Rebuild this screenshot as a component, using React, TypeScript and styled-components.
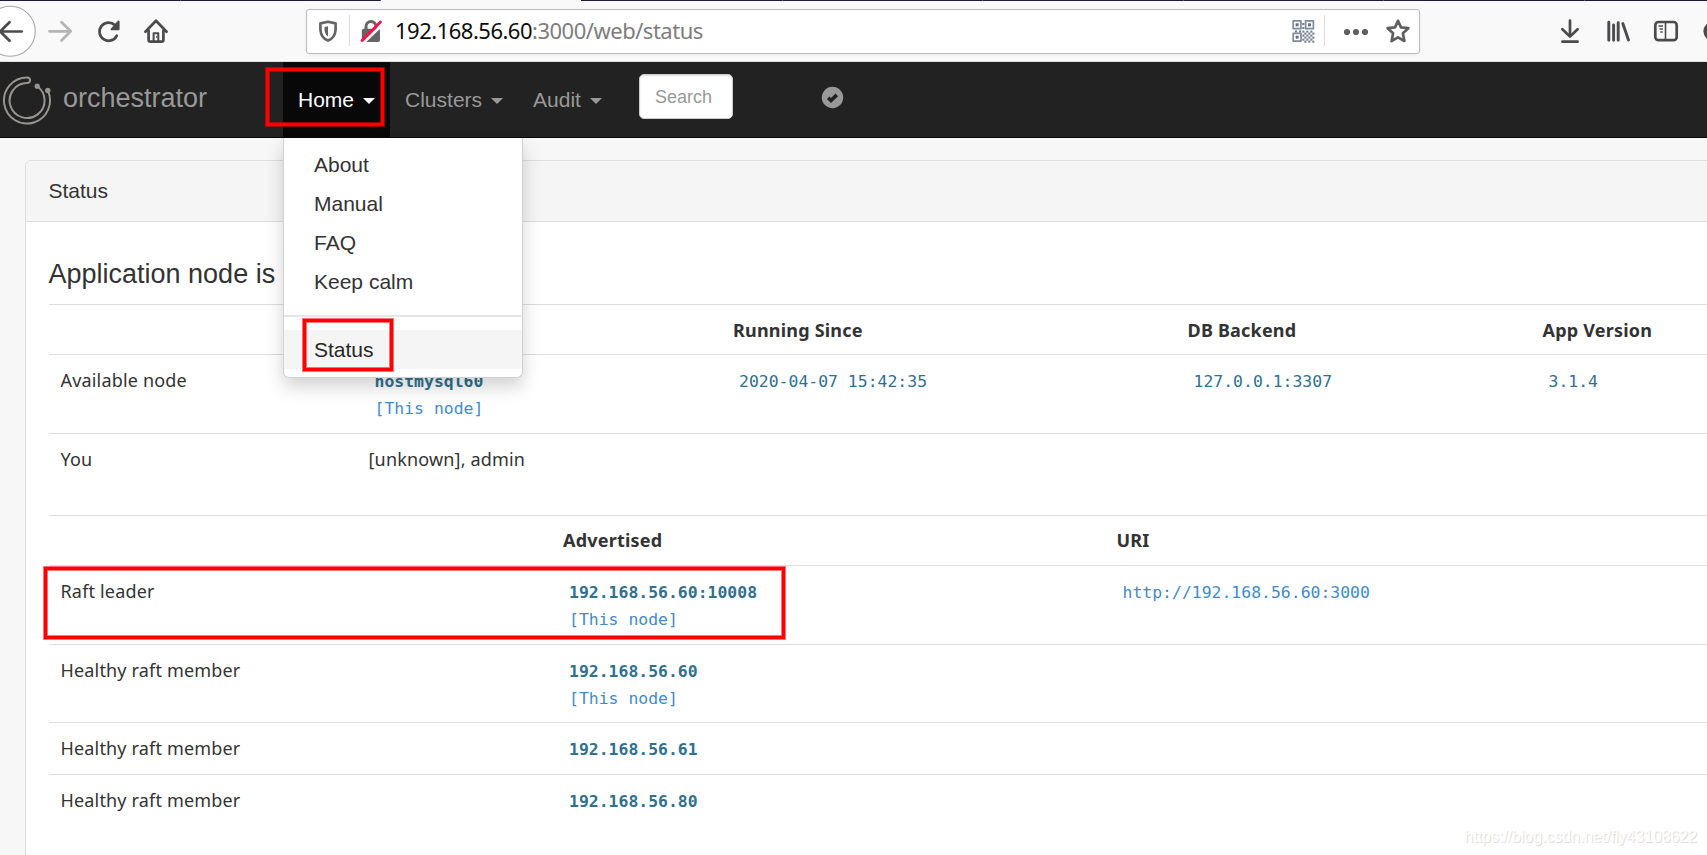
import React from "react";
import styled, { createGlobalStyle } from "styled-components";

const sans = `"Liberation Sans", Arial, sans-serif`;
const humanist = `"Noto Sans", "Open Sans", sans-serif`;
const mono = `"DejaVu Sans Mono", "Liberation Mono", monospace`;

const GlobalStyle = createGlobalStyle`
  * { box-sizing: border-box; }
  html, body { margin: 0; height: 100%; overflow: hidden; background: #f7f7f7; }
  body { font-family: ${sans}; font-size: 21px; line-height: 30px; color: #333; }
`;

const Page = styled.div`
  position: relative;
  width: 1707px;
  height: 855px;
  overflow: hidden;
  display: flex;
  flex-direction: column;
`;

/* ---------- browser chrome ---------- */

const TabStrip = styled.div`
  display: flex;
  flex: none;
  height: 1px;
  background: #1c1b3a;
`;

const TabSegment = styled.span<{ $w: number; $active?: boolean }>`
  width: ${(p) => p.$w}px;
  background: ${(p) => (p.$active ? "#f9f9fa" : "#1c1b3a")};
  border-right: 1px solid ${(p) => (p.$active ? "#f9f9fa" : "#55546c")};
`;

const BrowserBar = styled.header`
  display: flex;
  flex: none;
  align-items: flex-start;
  height: 61px;
  background: #f9f9fa;
  border-bottom: 1px solid #dde1dd;
`;

const Glyph = styled.svg<{ $top: number; $gap?: number; $color?: string }>`
  display: block;
  flex: none;
  margin-top: ${(p) => p.$top}px;
  margin-left: ${(p) => p.$gap ?? 0}px;
  fill: none;
  stroke: ${(p) => p.$color ?? "#4b4b4d"};
  stroke-width: 2.7;
  stroke-linecap: round;
  stroke-linejoin: round;
`;

const AddressBar = styled.div`
  display: flex;
  flex: none;
  align-items: flex-start;
  width: 1114px;
  height: 45px;
  margin: 8px 0 0 136px;
  background: #fff;
  border: 1px solid #bcbcbc;
  border-radius: 3px;
  box-shadow: 0 1px 4px rgba(0, 0, 0, 0.06);
`;

const BarDivider = styled.span<{ $gap: number }>`
  flex: none;
  width: 1px;
  height: 31px;
  margin: 5px 0 0 ${(p) => p.$gap}px;
  background: #dcdcdc;
`;

const Url = styled.div`
  flex: none;
  width: 896px;
  margin: 5px 0 0 11px;
  font: 22px/30px ${humanist};
  letter-spacing: -0.5px;
  color: #7d7d7d;
  white-space: pre;
`;

const Host = styled.span`
  color: #0c0c0d;
`;

/* ---------- application navbar ---------- */

const Navbar = styled.nav`
  display: flex;
  flex: none;
  height: 76px;
  background: #222;
  border-bottom: 1px solid #080808;
`;

const Brand = styled.div`
  display: flex;
  width: 283px;
  padding: 14px 0 0 2px;
  color: #999;
  font-size: 27px;
`;

const BrandName = styled.span`
  margin: 7px 0 0 11px;
`;

const NavItem = styled.div<{ $active?: boolean }>`
  display: flex;
  align-items: center;
  gap: 9px;
  height: 75px;
  padding: 1px 15px 0;
  color: ${(p) => (p.$active ? "#fff" : "#999")};
  background: ${(p) => (p.$active ? "#080808" : "transparent")};
`;

const Caret = styled.i`
  margin-top: 2px;
  border: 6px solid transparent;
  border-top-color: currentColor;
  border-bottom: 0;
`;

const SearchBox = styled.div`
  width: 94px;
  height: 45px;
  margin: 12px 0 0 22px;
  padding: 7px 15px;
  background: #fff;
  border: 1px solid #ccc;
  border-radius: 5px;
  box-shadow: inset 0 1px 2px rgba(0, 0, 0, 0.12);
  color: #999;
  font-size: 18px;
`;

/* ---------- panel and tables ---------- */

const Panel = styled.main`
  flex: none;
  width: 1720px;
  height: 740px;
  margin: 22px 0 0 25px;
  background: #fff;
  border: 1px solid #ddd;
  border-radius: 6px 0 0 0;
`;

const PanelHead = styled.div`
  height: 61px;
  padding: 15px 22.5px;
  background: #f5f5f5;
  border-bottom: 1px solid #ddd;
  border-radius: 5px 0 0 0;
`;

const PanelBody = styled.div`
  padding: 37px 0 0 23px;
`;

const Heading = styled.h3`
  margin: 0 0 15px -0.5px;
  font-size: 27px;
  line-height: 30px;
  font-weight: 400;
`;

const Row = styled.div<{ $cols: string; $h: number; $head?: boolean; $pad?: number }>`
  display: grid;
  grid-template-columns: ${(p) => p.$cols};
  height: ${(p) => p.$h}px;
  padding-top: ${(p) => p.$pad ?? 12}px;
  border-top: 1px solid #ddd;
  font-family: ${humanist};
  font-size: 18px;
  line-height: 27px;
  letter-spacing: ${(p) => (p.$head ? 0.2 : 0.17)}px;
  font-weight: ${(p) => (p.$head ? 700 : 400)};
`;

const Cell = styled.div`
  padding-left: 11.5px;
  white-space: nowrap;
`;

const Code = styled.code<{ $strong?: boolean; $link?: boolean }>`
  display: block;
  padding-left: 6px;
  font-family: ${mono};
  font-size: 16.45px;
  line-height: 26.5px;
  letter-spacing: 0;
  transform: translateY(2px);
  font-weight: ${(p) => (p.$strong ? 700 : 400)};
  color: ${(p) => (p.$link ? "#428bca" : "#31708f")};
`;

/* ---------- overlays ---------- */

const Menu = styled.div`
  position: absolute;
  left: 283px;
  top: 138px;
  width: 240px;
  height: 240px;
  padding-top: 7px;
  background: #fff;
  border: 1px solid #d2d2d2;
  border-top: 0;
  border-radius: 0 0 6px 6px;
  box-shadow: 0 9px 18px rgba(0, 0, 0, 0.175);
`;

const MenuItem = styled.div<{ $selected?: boolean }>`
  height: 39px;
  padding: 5px 30px 4px;
  color: ${(p) => (p.$selected ? "#262626" : "#333")};
  background: ${(p) => (p.$selected ? "#f5f5f5" : "transparent")};
`;

const MenuDivider = styled.div`
  height: 2px;
  margin: 14px 0 13px;
  background: #e5e5e5;
`;

const Marker = styled.div<{ $x: number; $y: number; $w: number; $h: number }>`
  position: absolute;
  left: ${(p) => p.$x}px;
  top: ${(p) => p.$y}px;
  width: ${(p) => p.$w}px;
  height: ${(p) => p.$h}px;
  border: 3px solid #f00;
  box-shadow: 0 0 0 1px rgba(255, 0, 0, 0.55), inset 0 0 0 1px rgba(255, 0, 0, 0.55);
`;

const Watermark = styled.div`
  position: absolute;
  right: 10px;
  bottom: 3px;
  font-size: 15.85px;
  color: #fff;
  text-shadow: 1px 1px 1px rgba(0, 0, 0, 0.16);
`;

const FINDERS = [
  [1293.2, 20.9],
  [1305.6, 20.9],
  [1293.2, 33.3],
];

/* Checkered modules between and below the three finder squares. */
const QR_MODULES: [number, number][] = [[1302.3, 23], [1302.3, 27]];
for (let r = 0; r < 6; r++) {
  for (let c = 0; c < 6; c++) {
    if ((r + c) % 2 === 0) QR_MODULES.push([1302.3 + c * 2, 30.6 + r * 2]);
  }
}
QR_MODULES.push([1295, 30.4], [1299, 30.4]);

const NODE_COLS = "308px 364.5px 454.5px 355px 1fr";
const RAFT_COLS = "502.5px 553.5px 1fr";

function BrowserToolbar() {
  return (
    <BrowserBar>
      <Glyph $top={4} width="37" height="54" viewBox="0 5 37 54">
        <circle cx="10.3" cy="31.3" r="25" fill="#fff" stroke="#a9a9a9" strokeWidth="1.1" />
        <path d="M21.8 31.5H0.5M9.5 22.2L0.2 31.5L9.5 40.8" />
      </Glyph>
      <Glyph $top={18} $gap={10} $color="#b4b4b5" width="26" height="25" viewBox="47 19 26 25">
        <path d="M49.5 31.3H70.5M61.5 22.2L70.7 31.3L61.5 40.5" />
      </Glyph>
      <Glyph $top={18} $gap={23} width="26" height="26" viewBox="96 19 26 26">
        <path d="M116.8 35.6A9.1 9.1 0 1 1 114.8 25" />
        <path d="M118.6 21.5V29.3H111.5Z" fill="#4b4b4d" strokeWidth="2" />
      </Glyph>
      <Glyph $top={17} $gap={20} width="28" height="28" viewBox="142 18 28 28">
        <path d="M145.4 31.7L156 20.8L166.6 31.7M148.6 30.5V39.7Q148.6 41.6 150.5 41.6H161.5Q163.4 41.6 163.4 39.7V30.5" />
        <path d="M153.6 41V33.2H158.3V41" strokeWidth="2" />
        <path d="M156.8 36.5V37.5" strokeWidth="1.2" />
      </Glyph>
      <AddressBar>
        <Glyph $top={9} $gap={10} $color="#656566" width="22" height="26" viewBox="317 19 22 26">
          <path d="M328 21.8L335.6 23.4V29.5Q335.2 37.8 328 40.6Q320.8 37.8 320.4 29.5V23.4Z" />
          <path d="M328 26.2L324.5 27V30Q325 34.8 328 36.6Z" fill="#656566" stroke="none" />
        </Glyph>
        <BarDivider $gap={10} />
        <Glyph $top={9} $gap={9} width="25" height="26" viewBox="359 19 25 26">
          <path d="M366 29.5V26.5A5 5 0 0 1 376 26.5V29.5" stroke="#656566" strokeWidth="3" />
          <rect x="361.8" y="28.8" width="18.2" height="13.2" rx="2" fill="#656566" stroke="none" />
          <path d="M363.8 42.6L383 24" stroke="#fff" strokeWidth="2.6" strokeLinecap="butt" />
          <path d="M362 40.4L380.4 21.9" stroke="#ff0f4a" strokeWidth="2.8" />
        </Glyph>
        <Url>
          <Host>192.168.56.60</Host>:3000/web/status
        </Url>
        <Glyph $top={10} $gap={0.5} width="23" height="23" viewBox="1292 20 23 23">
          {FINDERS.map(([x, y]) => (
            <g key={`${x}-${y}`}>
              <rect x={x} y={y} width="7.8" height="7.8" stroke="#7f8b98" strokeWidth="1.7" />
              <rect x={x + 2.4} y={y + 2.4} width="3" height="3" fill="#66727f" stroke="none" />
            </g>
          ))}
          {QR_MODULES.map(([x, y]) => (
            <rect key={`${x}:${y}`} x={x} y={y} width="2.1" height="2.1" fill="#75808d" stroke="none" />
          ))}
        </Glyph>
        <BarDivider $gap={9} />
        <Glyph $top={18} $gap={18} width="26" height="8" viewBox="1343 27 26 8">
          {[1347, 1356, 1365].map((cx) => (
            <circle key={cx} cx={cx} cy="31" r="3.1" fill="#5f5f60" stroke="none" />
          ))}
        </Glyph>
        <Glyph $top={8} $gap={16} $color="#5f5f60" width="26" height="27" viewBox="1385 18 26 27">
          <path d="M1398 20.8L1401 27.4L1408.4 28.2L1402.9 33.2L1404.4 41L1398 37.3L1391.6 41L1393.1 33.2L1387.6 28.2L1395 27.4Z" />
        </Glyph>
      </AddressBar>
      <Glyph $top={17} $gap={140} width="20" height="27" viewBox="1560 18 20 27">
        <path d="M1570 20.5V35.5M1562.4 29.3L1570 36.6L1577.6 29.3M1562.4 41.7H1577.6" />
      </Glyph>
      <Glyph $top={18} $gap={26} width="26" height="26" viewBox="1606 19 26 26">
        <path d="M1608.8 22.2V40.3M1613.6 25V40.3M1618.2 22.8V40.3M1622.8 23.6L1628.5 40" strokeWidth="2.9" />
      </Glyph>
      <Glyph $top={18} $gap={21} width="27" height="26" viewBox="1653 19 27 26">
        <rect x="1655.3" y="22" width="21.4" height="18.2" rx="3.2" />
        <path d="M1665.5 22V40" strokeWidth="1.6" />
        <path d="M1659 26H1662.5M1660 29H1662.5M1660.8 32H1662.3" strokeWidth="1.3" />
      </Glyph>
      <Glyph $top={18} $gap={22} width="5" height="26" viewBox="1702 19 5 26">
        <circle cx="1713" cy="31.3" r="9.6" fill="#4b4b4d" stroke="none" />
      </Glyph>
    </BrowserBar>
  );
}

function AppNavbar() {
  return (
    <Navbar>
      <Brand>
        <svg width="50" height="49" viewBox="2 75.5 50 49" fill="none" stroke="#979591" strokeWidth="2" strokeLinecap="round">
          <path d="M47.6 89.8A23 23 0 1 1 27.2 77A2.75 2.75 0 0 1 27.4 82.5A17.5 17.5 0 1 0 37.2 85.7" />
          <circle cx="37.2" cy="85.7" r="2.6" fill="#979591" stroke="none" />
          <circle cx="47.8" cy="89.9" r="2.7" fill="#979591" stroke="none" />
        </svg>
        <BrandName>orchestrator</BrandName>
      </Brand>
      <NavItem $active>Home<Caret /></NavItem>
      <NavItem>Clusters<Caret /></NavItem>
      <NavItem>Audit<Caret /></NavItem>
      <SearchBox>Search</SearchBox>
      <Glyph $top={24} $gap={88} width="23" height="23" viewBox="0 0 23 23">
        <circle cx="11.5" cy="11.5" r="10.7" fill="#999" stroke="none" />
        <path d="M7.2 11.7L10 14.5L15.8 8.9" stroke="#222" strokeWidth="3.6" strokeLinecap="butt" strokeLinejoin="miter" />
      </Glyph>
    </Navbar>
  );
}

export default function App() {
  return (
    <>
      <GlobalStyle />
      <Page>
        <TabStrip>
          <TabSegment $w={181} />
          <TabSegment $w={200} />
          <TabSegment $w={200} $active />
          <TabSegment $w={202} />
          <TabSegment $w={200} />
          <TabSegment $w={201} />
          <TabSegment $w={200} />
          <TabSegment $w={201} />
        </TabStrip>
        <BrowserToolbar />
        <AppNavbar />
        <Panel>
          <PanelHead>Status</PanelHead>
          <PanelBody>
            <Heading>Application node is</Heading>
            <Row $cols={NODE_COLS} $h={50} $head>
              <Cell />
              <Cell />
              <Cell>Running Since</Cell>
              <Cell>DB Backend</Cell>
              <Cell>App Version</Cell>
            </Row>
            <Row $cols={NODE_COLS} $h={79}>
              <Cell>Available node</Cell>
              <Cell>
                <Code $strong>hostmysql60</Code>
                <Code $link>[This node]</Code>
              </Cell>
              <Cell><Code>2020-04-07 15:42:35</Code></Cell>
              <Cell><Code>127.0.0.1:3307</Code></Cell>
              <Cell><Code>3.1.4</Code></Cell>
            </Row>
            <Row $cols={NODE_COLS} $h={82}>
              <Cell>You</Cell>
              <Cell>[unknown], admin</Cell>
            </Row>
            <Row $cols={RAFT_COLS} $h={50} $pad={11} $head>
              <Cell />
              <Cell>Advertised</Cell>
              <Cell>URI</Cell>
            </Row>
            <Row $cols={RAFT_COLS} $h={79}>
              <Cell>Raft leader</Cell>
              <Cell>
                <Code $strong>192.168.56.60:10008</Code>
                <Code $link>[This node]</Code>
              </Cell>
              <Cell><Code $link>http://192.168.56.60:3000</Code></Cell>
            </Row>
            <Row $cols={RAFT_COLS} $h={78}>
              <Cell>Healthy raft member</Cell>
              <Cell>
                <Code $strong>192.168.56.60</Code>
                <Code $link>[This node]</Code>
              </Cell>
            </Row>
            <Row $cols={RAFT_COLS} $h={52}>
              <Cell>Healthy raft member</Cell>
              <Cell><Code $strong>192.168.56.61</Code></Cell>
            </Row>
            <Row $cols={RAFT_COLS} $h={52}>
              <Cell>Healthy raft member</Cell>
              <Cell><Code $strong>192.168.56.80</Code></Cell>
            </Row>
          </PanelBody>
        </Panel>
        <Menu>
          <MenuItem>About</MenuItem>
          <MenuItem>Manual</MenuItem>
          <MenuItem>FAQ</MenuItem>
          <MenuItem>Keep calm</MenuItem>
          <MenuDivider />
          <MenuItem $selected>Status</MenuItem>
        </Menu>
        <Marker $x={266} $y={68} $w={118} $h={58} />
        <Marker $x={303} $y={319} $w={90} $h={52} />
        <Marker $x={44} $y={567} $w={741} $h={72} />
        <Watermark>https://blog.csdn.net/fly43108622</Watermark>
      </Page>
    </>
  );
}
